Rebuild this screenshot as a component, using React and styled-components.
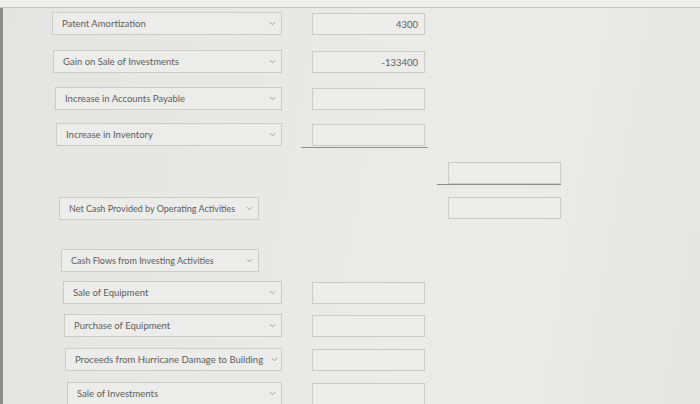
import React from "react";
import styled, { createGlobalStyle } from "styled-components";

const GlobalStyle = createGlobalStyle`
	html, body {
		margin: 0;
		padding: 0;
		background: #e7e7e5;
	}
	body {
		font-family: Lato, "Open Sans", sans-serif;
		width: 700px;
		height: 404px;
		overflow: hidden;
	}
`;

const rows = [
	{ top: 4, indent: 52, label: "Patent Amortization", amount: "4300" },
	{ top: 15, indent: 53, label: "Gain on Sale of Investments", amount: "-133400" },
	{ top: 14, indent: 55, label: "Increase in Accounts Payable", amount: "" },
	{ top: 13, indent: 56, label: "Increase in Inventory", amount: "", underline: true },
	{ top: 16, total: true, totalUnderline: true },
	{ top: 12, indent: 59, width: 200, size: 9, label: "Net Cash Provided by Operating Activities", total: true, noAmount: true },
	{ top: 29, indent: 61, width: 198, size: 9, label: "Cash Flows from Investing Activities", noAmount: true },
	{ top: 9, indent: 63, label: "Sale of Equipment", amount: "" },
	{ top: 10, indent: 64, label: "Purchase of Equipment", amount: "" },
	{ top: 11, indent: 65, label: "Proceeds from Hurricane Damage to Building", amount: "" },
	{ top: 11, indent: 67, label: "Sale of Investments", amount: "" },
];

export default function App() {
	return (
		<>
			<GlobalStyle />
			<Page>
				<TopBar />
				{rows.map((row, i) => (
					<Row key={i} top={row.top}>
						<LabelCell indent={row.indent || 0}>
							{row.label && (
								<Select width={row.width} size={row.size || 9.5}>
									<span>{row.label}</span>
									<Chevron viewBox="0 0 8 6">
										<path d="M1 1.5 L4 4.5 L7 1.5" />
									</Chevron>
								</Select>
							)}
						</LabelCell>
						<AmountCell underline={row.underline}>
							{row.label && !row.noAmount && <Input>{row.amount}</Input>}
						</AmountCell>
						<TotalCell underline={row.totalUnderline}>
							{row.total && <Input />}
						</TotalCell>
					</Row>
				))}
			</Page>
		</>
	);
}

const Page = styled.div`
	height: 404px;
	background: linear-gradient(100deg, #e4e4e2 0%, #e9e9e7 45%, #ebebe9 70%, #e6e6e4 100%);
	border-left: 3px solid #8c8c8a;
	box-sizing: border-box;
`;

const TopBar = styled.div`
	height: 7px;
	background: #eeeeed;
	border-bottom: 1px solid #c4c4c2;
	margin-left: -3px;
`;

const Row = styled.div`
	display: flex;
	align-items: flex-start;
	height: 23px;
	margin-top: ${(p) => p.top}px;
`;

const LabelCell = styled.div`
	width: 279px;
	padding-left: ${(p) => p.indent - 3}px;
	box-sizing: border-box;
	flex-shrink: 0;
`;

const Select = styled.div`
	display: flex;
	align-items: center;
	justify-content: space-between;
	gap: 8px;
	height: 23px;
	width: ${(p) => (p.width ? `${p.width}px` : "auto")};
	box-sizing: border-box;
	padding: 0 5px 0 9px;
	border: 1px solid #cacac8;
	background: #ececea;
	color: #5c5c5c;
	font-size: ${(p) => p.size}px;
	white-space: nowrap;
	overflow: hidden;
`;

const Chevron = styled.svg`
	width: 7px;
	height: 5px;
	flex-shrink: 0;
	fill: none;
	stroke: #9a9a9a;
	stroke-width: 1.2;
`;

const AmountCell = styled.div`
	width: 115px;
	padding: 1px 1px 1px 11px;
	flex-shrink: 0;
	margin-left: 19px;
	border-bottom: ${(p) => (p.underline ? "1.5px solid #8e8e8c" : "none")};
`;

const TotalCell = styled.div`
	width: 110px;
	padding: 0 3px 0 11px;
	margin-left: 9px;
	flex-shrink: 0;
	border-bottom: ${(p) => (p.underline ? "1.5px solid #8e8e8c" : "none")};
`;

const Input = styled.div`
	height: 22px;
	box-sizing: border-box;
	border: 1px solid #cacac8;
	background: #ececea;
	color: #5c5c5c;
	font-size: 9.5px;
	display: flex;
	align-items: center;
	justify-content: flex-end;
	padding-right: 6px;
	width: 113px;
`;
